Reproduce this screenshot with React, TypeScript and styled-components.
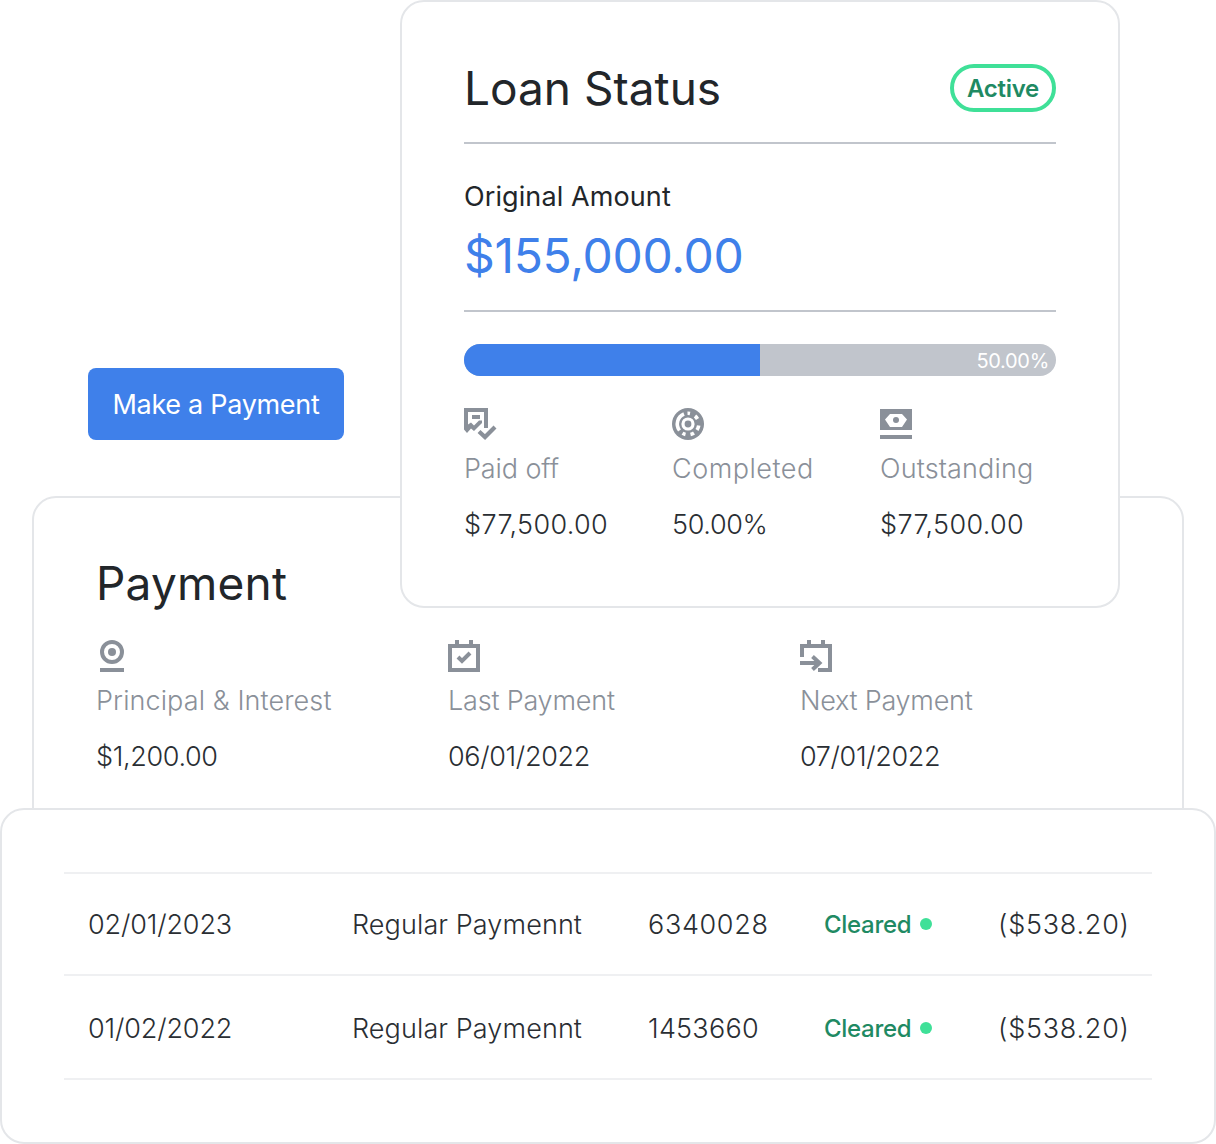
import React from "react";
import styled, { createGlobalStyle } from "styled-components";

const Global = createGlobalStyle`
  html, body { margin: 0; padding: 0; background: #fff; }
  body { font-family: Inter, "Noto Sans", sans-serif; color: #2a2e33; }
`;

const Page = styled.div`
  width: 1216px;
  height: 1144px;
  overflow: hidden;
`;

const TopRow = styled.div`
  display: flex;
  align-items: flex-start;
  gap: 56px;
  padding-left: 88px;
`;

const PayButton = styled.button`
  width: 256px;
  height: 72px;
  margin-top: 368px;
  border: 0;
  border-radius: 8px;
  background: #3f80ea;
  color: #fff;
  font: 400 27px Inter, sans-serif;
  letter-spacing: -0.3px;
`;

const Card = styled.section`
  box-sizing: border-box;
  background: #fff;
  border: 2px solid #e4e6e9;
  border-radius: 24px;
`;

const StatusCard = styled(Card)`
  position: relative;
  z-index: 2;
  width: 720px;
  height: 608px;
  padding: 0 62px;
`;

const StatusHeader = styled.header`
  box-sizing: border-box;
  display: flex;
  justify-content: space-between;
  align-items: center;
  height: 142px;
  padding-top: 32px;
  border-bottom: 2px solid #c1c5cc;
`;

const Title = styled.h2`
  margin: 0;
  font-size: 46px;
  line-height: 56px;
  font-weight: 400;
  letter-spacing: 0;
  color: #22262a;
`;

const Badge = styled.span`
  box-sizing: border-box;
  width: 106px;
  height: 48px;
  display: flex;
  align-items: center;
  justify-content: center;
  border: 4px solid #3fe098;
  border-radius: 24px;
  color: #1f8a63;
  font-size: 24px;
  font-weight: 600;
  letter-spacing: -0.3px;
`;

const AmountBlock = styled.div`
  box-sizing: border-box;
  height: 168px;
  padding-top: 35px;
  border-bottom: 2px solid #c1c5cc;
`;

const AmountLabel = styled.div`
  font-size: 27px;
  line-height: 36px;
  font-weight: 400;
  letter-spacing: 0.1px;
  color: #22262a;
`;

const AmountValue = styled.div`
  margin-top: 11px;
  font-size: 48px;
  line-height: 60px;
  font-weight: 400;
  letter-spacing: -0.3px;
  color: #3f80ea;
`;

const Track = styled.div`
  position: relative;
  height: 32px;
  margin-top: 32px;
  border-radius: 16px;
  background: #c1c5cc;
  overflow: hidden;
`;

const Fill = styled.div`
  height: 100%;
  background: #3f80ea;
`;

const TrackLabel = styled.span`
  position: absolute;
  right: 7px;
  top: 0;
  line-height: 34px;
  font-size: 20px;
  font-weight: 400;
  letter-spacing: -0.3px;
  color: #fff;
`;

const Stats = styled.div<{ $column: number }>`
  display: grid;
  grid-template-columns: repeat(3, ${(p) => p.$column}px);
`;

const StatusStats = styled(Stats)`
  margin-top: 32px;
`;

const Stat = styled.div`
  display: flex;
  flex-direction: column;
`;

const IconBox = styled.svg`
  display: block;
  width: 34px;
  height: 34px;
  color: #8a9099;
`;

const StatLabel = styled.div<{ $spacing: number }>`
  margin-top: 9px;
  font-size: 27px;
  line-height: 36px;
  font-weight: 300;
  letter-spacing: ${(p) => p.$spacing}px;
  color: #8a9099;
`;

const StatValue = styled.div<{ $spacing: number }>`
  margin-top: 20px;
  font-size: 27px;
  line-height: 36px;
  font-weight: 300;
  letter-spacing: ${(p) => p.$spacing}px;
  color: #2a2e33;
`;

const PaymentCard = styled(Card)`
  position: relative;
  z-index: 1;
  width: 1152px;
  height: 400px;
  margin: -112px 0 0 32px;
  padding: 57px 62px 0;
`;

const PaymentTitle = styled(Title)`
  letter-spacing: 0.2px;
`;

const PaymentStats = styled(Stats)`
  margin-top: 29px;
`;

const TableCard = styled(Card)`
  position: relative;
  z-index: 3;
  width: 1216px;
  height: 336px;
  margin-top: -88px;
  padding: 62px 62px 0;
`;

const Table = styled.div`
  border-top: 2px solid #eff0f2;
`;

const Row = styled.div`
  box-sizing: border-box;
  display: grid;
  grid-template-columns: 264px 296px 176px 174px 1fr;
  align-items: center;
  height: 104px;
  padding: 2px 0 0 24px;
  border-bottom: 2px solid #eff0f2;
  font-size: 27px;
  font-weight: 300;
  color: #2a2e33;

  &:first-child {
    height: 102px;
    padding-top: 0;
  }
`;

const Cell = styled.span<{ $spacing: number }>`
  letter-spacing: ${(p) => p.$spacing}px;
`;

const Cleared = styled.span`
  display: flex;
  align-items: center;
  gap: 9px;
  color: #1f8a63;
  font-size: 24px;
  font-weight: 500;
  letter-spacing: -0.3px;
`;

const Dot = styled.i`
  width: 12px;
  height: 12px;
  border-radius: 50%;
  background: #3fe098;
`;

const PaidIcon = () => (
  <IconBox viewBox="0 0 34 34" fill="currentColor">
    <path fillRule="evenodd" d="M0 0H24V20H20V4H4V16.5L7 14.5L10 17.5L15 12.5L18 12.5V15L10 23L7 20.5L3 25L0 21.5ZM8 7H16V11H8Z" />
    <path d="M15 23.5L21 29L31 19" fill="none" stroke="currentColor" strokeWidth="4.2" />
  </IconBox>
);

const WheelIcon = () => (
  <IconBox viewBox="0 0 34 34" fill="currentColor">
    <circle cx="16" cy="16" r="16" />
    <g fill="none" stroke="#fff" strokeWidth="3.6">
      <path d="M7.5 22.5A10.8 10.8 0 0 1 12 6" />
      <path d="M15.5 5.2A10.8 10.8 0 0 1 18 5.4" />
      <path d="M23 8A10.8 10.8 0 0 1 25.5 11" />
      <path d="M26.7 17.5A10.8 10.8 0 0 1 25 22" />
      <path d="M22 25A10.8 10.8 0 0 1 18.5 26.5" />
      <path d="M13.5 26.5A10.8 10.8 0 0 1 10.5 25.3" />
    </g>
    <circle cx="16" cy="16" r="6.6" fill="#fff" />
    <circle cx="16" cy="16" r="3.4" />
  </IconBox>
);

const CashIcon = () => (
  <IconBox viewBox="0 0 34 34" fill="currentColor">
    <path fillRule="evenodd" d="M0 1H32V22H0ZM5 11.5L10 6H22L27 11.5L22 19H10Z" />
    <circle cx="16" cy="12" r="3" />
    <rect y="27" width="32" height="4" />
  </IconBox>
);

const TargetIcon = () => (
  <IconBox viewBox="0 0 34 34" fill="none">
    <circle cx="16" cy="12" r="10" stroke="currentColor" strokeWidth="4" />
    <circle cx="16" cy="12" r="4" fill="currentColor" />
    <rect x="4" y="28" width="24" height="4" fill="currentColor" />
  </IconBox>
);

const CalendarIcon = () => (
  <IconBox viewBox="0 0 34 34" fill="currentColor">
    <path fillRule="evenodd" d="M0 4H7V0H11V4H21V0H25V4H32V32H0ZM4 8V28H28V8Z" />
    <path d="M10 17L14 21L22 13" fill="none" stroke="currentColor" strokeWidth="4" />
  </IconBox>
);

const CalendarArrowIcon = () => (
  <IconBox viewBox="0 0 34 34" fill="currentColor">
    <path d="M0 4H7V0H11V4H21V0H25V4H32V32H18V28H28V8H4V17H0Z" />
    <rect y="21" width="20" height="4" />
    <path d="M12.5 16.5L19.5 23L12.5 29.5" fill="none" stroke="currentColor" strokeWidth="4" />
  </IconBox>
);

const statusStats = [
  { icon: <PaidIcon />, label: "Paid off", labelSpacing: -0.1, value: "$77,500.00", spacing: 0.35 },
  { icon: <WheelIcon />, label: "Completed", labelSpacing: 0.5, value: "50.00%", spacing: -0.35 },
  { icon: <CashIcon />, label: "Outstanding", labelSpacing: 0.15, value: "$77,500.00", spacing: 0.35 },
];

const paymentStats = [
  { icon: <TargetIcon />, label: "Principal & Interest", labelSpacing: 0.1, value: "$1,200.00", spacing: -0.35 },
  { icon: <CalendarIcon />, label: "Last Payment", labelSpacing: -0.2, value: "06/01/2022", spacing: -0.35 },
  { icon: <CalendarArrowIcon />, label: "Next Payment", labelSpacing: -0.25, value: "07/01/2022", spacing: -0.35 },
];

const rows = [
  { date: "02/01/2023", id: "6340028", idSpacing: 0.65 },
  { date: "01/02/2022", id: "1453660", idSpacing: 0.25 },
];

export default function App() {
  return (
    <Page>
      <Global />
      <TopRow>
        <PayButton>Make a Payment</PayButton>
        <StatusCard>
          <StatusHeader>
            <Title>Loan Status</Title>
            <Badge>Active</Badge>
          </StatusHeader>
          <AmountBlock>
            <AmountLabel>Original Amount</AmountLabel>
            <AmountValue>$155,000.00</AmountValue>
          </AmountBlock>
          <Track>
            <Fill style={{ width: "50%" }} />
            <TrackLabel>50.00%</TrackLabel>
          </Track>
          <StatusStats $column={208}>
            {statusStats.map((s) => (
              <Stat key={s.label}>
                {s.icon}
                <StatLabel $spacing={s.labelSpacing}>{s.label}</StatLabel>
                <StatValue $spacing={s.spacing}>{s.value}</StatValue>
              </Stat>
            ))}
          </StatusStats>
        </StatusCard>
      </TopRow>
      <PaymentCard>
        <PaymentTitle>Payment</PaymentTitle>
        <PaymentStats $column={352}>
          {paymentStats.map((s) => (
            <Stat key={s.label}>
              {s.icon}
              <StatLabel $spacing={s.labelSpacing}>{s.label}</StatLabel>
              <StatValue $spacing={s.spacing}>{s.value}</StatValue>
            </Stat>
          ))}
        </PaymentStats>
      </PaymentCard>
      <TableCard>
        <Table>
          {rows.map((r) => (
            <Row key={r.id}>
              <Cell $spacing={-0.15}>{r.date}</Cell>
              <Cell $spacing={0.1}>Regular Paymennt</Cell>
              <Cell $spacing={r.idSpacing}>{r.id}</Cell>
              <Cleared>
                Cleared
                <Dot />
              </Cleared>
              <Cell $spacing={0.75}>($538.20)</Cell>
            </Row>
          ))}
        </Table>
      </TableCard>
    </Page>
  );
}
